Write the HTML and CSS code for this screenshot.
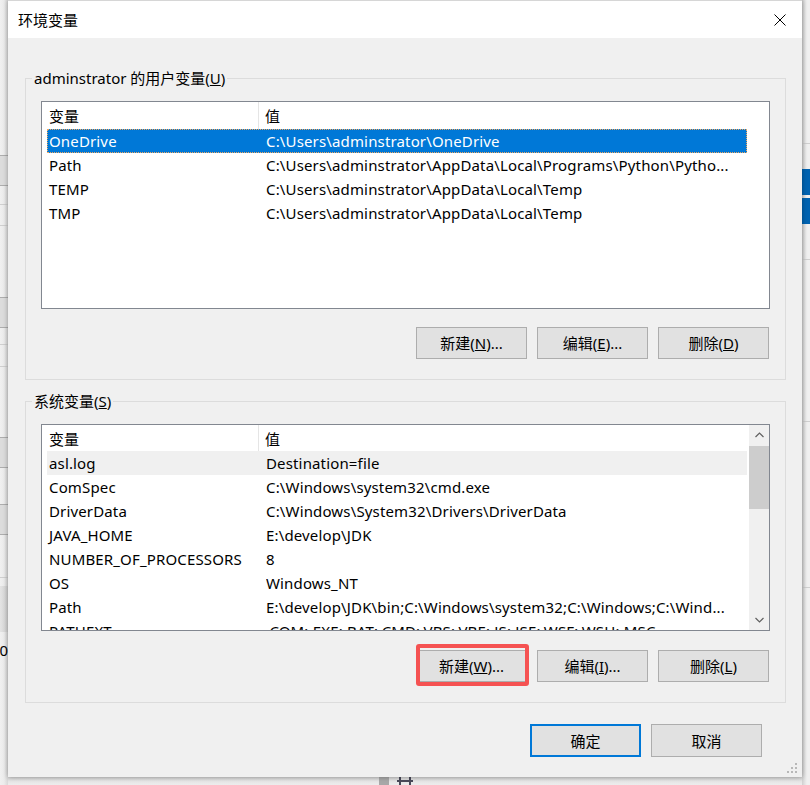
FILE: index.html
```html
<!DOCTYPE html>
<html lang="zh-CN">
<head>
<meta charset="utf-8">
<title>环境变量</title>
<link rel="stylesheet" href="styles.css">
</head>
<body>
<div class="desktop">
  <div class="strip strip-left">
    <div class="bg-btn b1"></div>
    <div class="bg-line l1"></div>
    <div class="bg-line l2"></div>
    <div class="bg-btn b2"></div>
    <div class="bg-line l3"></div>
    <div class="bg-line l4"></div>
    <div class="bg-btn b3"></div>
    <div class="bg-btn b4"></div>
    <div class="bg-line l5"></div>
    <div class="bg-block"></div>
    <div class="bg-text">00</div>
  </div>

  <div class="dialog-col">
    <div class="dialog">
      <div class="titlebar">
        <span class="title">环境变量</span>
        <svg class="close" width="12" height="12" viewBox="0 0 12 12"><path d="M0.5 0.5 L11.5 11.5 M11.5 0.5 L0.5 11.5" stroke="#000" stroke-width="1" fill="none"/></svg>
      </div>
      <div class="body">
        <div class="group">
          <div class="legend">adminstrator 的用户变量(<u>U</u>)</div>
          <div class="list list-user">
            <div class="head">
              <div class="hcol1">变量</div>
              <div class="hcol2">值</div>
            </div>
            <div class="row selected"><div class="c1">OneDrive</div><div class="c2">C:\Users\adminstrator\OneDrive</div></div>
            <div class="row"><div class="c1">Path</div><div class="c2">C:\Users\adminstrator\AppData\Local\Programs\Python\Pytho...</div></div>
            <div class="row"><div class="c1">TEMP</div><div class="c2">C:\Users\adminstrator\AppData\Local\Temp</div></div>
            <div class="row"><div class="c1">TMP</div><div class="c2">C:\Users\adminstrator\AppData\Local\Temp</div></div>
          </div>
          <div class="btn-row">
            <button class="btn">新建(<u>N</u>)...</button>
            <button class="btn">编辑(<u>E</u>)...</button>
            <button class="btn">删除(<u>D</u>)</button>
          </div>
        </div>

        <div class="group group-sys">
          <div class="legend">系统变量(<u>S</u>)</div>
          <div class="list list-sys">
            <div class="list-main">
              <div class="head">
                <div class="hcol1">变量</div>
                <div class="hcol2">值</div>
              </div>
              <div class="row hover"><div class="c1">asl.log</div><div class="c2">Destination=file</div></div>
              <div class="row"><div class="c1">ComSpec</div><div class="c2">C:\Windows\system32\cmd.exe</div></div>
              <div class="row"><div class="c1">DriverData</div><div class="c2">C:\Windows\System32\Drivers\DriverData</div></div>
              <div class="row"><div class="c1">JAVA_HOME</div><div class="c2">E:\develop\JDK</div></div>
              <div class="row"><div class="c1">NUMBER_OF_PROCESSORS</div><div class="c2">8</div></div>
              <div class="row"><div class="c1">OS</div><div class="c2">Windows_NT</div></div>
              <div class="row"><div class="c1">Path</div><div class="c2">E:\develop\JDK\bin;C:\Windows\system32;C:\Windows;C:\Wind...</div></div>
              <div class="row"><div class="c1">PATHEXT</div><div class="c2">.COM;.EXE;.BAT;.CMD;.VBS;.VBE;.JS;.JSE;.WSF;.WSH;.MSC</div></div>
            </div>
            <div class="scrollbar">
              <div class="sb-arrow">
                <svg width="9" height="6" viewBox="0 0 9 6"><path d="M0.5 5 L4.5 1 L8.5 5" stroke="#606060" stroke-width="1.2" fill="none"/></svg>
              </div>
              <div class="sb-thumb"></div>
              <div class="sb-track"></div>
              <div class="sb-arrow">
                <svg width="9" height="6" viewBox="0 0 9 6"><path d="M0.5 1 L4.5 5 L8.5 1" stroke="#606060" stroke-width="1.2" fill="none"/></svg>
              </div>
            </div>
          </div>
          <div class="btn-row btn-row-sys">
            <div class="btn-wrap">
              <button class="btn">新建(<u>W</u>)...</button>
              <div class="highlight"></div>
            </div>
            <button class="btn">编辑(<u>I</u>)...</button>
            <button class="btn">删除(<u>L</u>)</button>
          </div>
        </div>

        <div class="footer">
          <button class="btn btn-default">确定</button>
          <button class="btn">取消</button>
        </div>
        <svg class="grip" width="11" height="11" viewBox="0 0 11 11">
          <rect x="8" y="0" width="2" height="2" fill="#b8b8b8"/>
          <rect x="4" y="4" width="2" height="2" fill="#b8b8b8"/>
          <rect x="8" y="4" width="2" height="2" fill="#b8b8b8"/>
          <rect x="0" y="8" width="2" height="2" fill="#b8b8b8"/>
          <rect x="4" y="8" width="2" height="2" fill="#b8b8b8"/>
          <rect x="8" y="8" width="2" height="2" fill="#b8b8b8"/>
        </svg>
      </div>
    </div>
    <div class="bottom-strip">
      <div class="bs-block"></div>
      <svg class="bs-icon" width="16" height="8" viewBox="0 0 16 8">
        <rect x="0" y="3" width="16" height="2" fill="#4a4a5a"/>
        <rect x="2" y="0" width="2" height="8" fill="#4a4a5a"/>
        <rect x="12" y="0" width="2" height="8" fill="#4a4a5a"/>
      </svg>
    </div>
  </div>

  <div class="strip strip-right">
    <div class="bg-line r1"></div>
    <div class="bg-blue bl1"></div>
    <div class="bg-blue bl2"></div>
    <div class="bg-line r2"></div>
    <div class="bg-line r3"></div>
    <div class="bg-line r4"></div>
  </div>
</div>
</body>
</html>
```

FILE: styles.css
```css
* { box-sizing: border-box; }

html, body {
  margin: 0;
  padding: 0;
}

body {
  width: 810px;
  height: 785px;
  overflow: hidden;
  background: #f0f0f0;
  font-family: "Noto Sans", "Noto Sans CJK SC", sans-serif;
  font-size: 15px;
  color: #000;
}

.desktop {
  display: flex;
  width: 810px;
  height: 785px;
}

/* background app strips */
.strip {
  display: flex;
  flex-direction: column;
  flex: none;
  background: #f0f0f0;
}

.strip-left {
  width: 8px;
  background: linear-gradient(to right, #f0f0f0 0, #ececec 4px, #d8d8d8 8px);
}

.bg-btn {
  height: 31px;
  background: #dcdcdc;
  border-top: 1px solid #adadad;
  border-bottom: 1px solid #adadad;
}
.b1 { margin-top: 155px; }
.l1 { margin-top: 18px; }
.l2 { margin-top: 20px; }
.b2 { margin-top: 71px; }
.l3 { margin-top: 16px; }
.l4 { margin-top: 21px; }
.b3 { margin-top: 70px; }
.b4 { margin-top: 36px; }
.l5 { margin-top: 42px; }

.bg-line {
  height: 1px;
  background: #cfcfcf;
}

.bg-block {
  margin-top: 8px;
  height: 46px;
  background: linear-gradient(to right, #e4e4e4, #d0d0d0);
}

.bg-text {
  margin-top: 8px;
  font-size: 15px;
  line-height: 20px;
  white-space: nowrap;
  overflow: hidden;
  width: 8px;
  direction: rtl;
}

.strip-right {
  width: 8px;
  background: linear-gradient(to right, #cfcfcf 0, #e4e4e4 3px, #f0f0f0 5px);
}

.r1 { margin-top: 143px; }
.bg-blue {
  height: 26px;
  background: #0063b1;
}
.bl1 { margin-top: 25px; }
.bl2 { margin-top: 3px; }
.r2 { margin-top: 35px; }
.r3 { margin-top: 161px; }
.r4 { margin-top: 165px; }

/* dialog column */
.dialog-col {
  width: 794px;
  flex: none;
  display: flex;
  flex-direction: column;
}

.dialog {
  height: 777px;
  background: #f0f0f0;
  display: flex;
  flex-direction: column;
  box-shadow: 0 0 5px rgba(0, 0, 0, 0.35);
  position: relative;
  z-index: 1;
}

.titlebar {
  height: 38px;
  background: #fff;
  display: flex;
  align-items: center;
  justify-content: space-between;
  padding: 0 16px 0 10px;
  border-top: 1px solid #d6d6d6;
  flex: none;
}

.title {
  font-size: 15px;
  line-height: 20px;
}

.close { display: block; }

.body {
  flex: 1;
  padding: 40px 16px 0 17px;
  display: flex;
  flex-direction: column;
  position: relative;
}

/* group boxes */
.group {
  border: 1px solid #dcdcdc;
  padding: 0 15px 20px 15px;
  display: flex;
  flex-direction: column;
  height: 302px;
}

.group-sys { margin-top: 21px; }

.legend {
  margin: -12px 0 0 -9px;
  padding: 0 2px;
  height: 22px;
  line-height: 22px;
  background: #f0f0f0;
  align-self: flex-start;
  white-space: nowrap;
}

/* lists */
.list {
  margin-top: 12px;
  height: 208px;
  background: #fff;
  border: 1px solid #828790;
  overflow: hidden;
}

.list-user {
  padding: 0 0 0 5px;
}

.list-sys {
  height: 207px;
  display: flex;
}

.list-main {
  flex: 1;
  padding-left: 5px;
  overflow: hidden;
}

.head {
  height: 27px;
  display: flex;
  align-items: stretch;
}

.list-sys .head { height: 26px; }

.hcol1 {
  width: 212px;
  padding-left: 2px;
  border-right: 1px solid #e5e5e5;
  display: flex;
  align-items: center;
}

.hcol2 {
  padding-left: 6px;
  display: flex;
  align-items: center;
}

.row {
  width: 700px;
  height: 24px;
  display: flex;
  align-items: center;
  white-space: nowrap;
  letter-spacing: 0.15px;
}

.c1 {
  width: 219px;
  padding-left: 2px;
  flex: none;
  overflow: hidden;
}

.c2 {
  flex: 1;
  overflow: hidden;
}

.row.selected {
  background: #0078d7;
  color: #fff;
  outline: 1px dotted #f0a860;
  outline-offset: -1px;
}

.row.hover {
  background: #f0f0f0;
}

/* scrollbar */
.scrollbar {
  width: 20px;
  margin-left: 1px;
  flex: none;
  background: #f0f0f0;
  display: flex;
  flex-direction: column;
}

.sb-arrow {
  height: 20px;
  display: flex;
  align-items: center;
  justify-content: center;
  flex: none;
}

.sb-thumb {
  margin-top: 1px;
  height: 63px;
  background: #cdcdcd;
  flex: none;
}

.sb-track { flex: 1; }

/* buttons */
.btn-row {
  margin-top: 18px;
  display: flex;
  justify-content: flex-end;
  gap: 10px;
  padding-right: 1px;
}

.btn-row-sys { margin-top: 19px; }

.btn {
  width: 111px;
  height: 32px;
  margin: 0;
  padding: 0;
  background: #e1e1e1;
  border: 1px solid #adadad;
  font-family: "Noto Sans", "Noto Sans CJK SC", sans-serif;
  font-size: 15px;
  color: #000;
  line-height: 20px;
}

.btn-wrap {
  position: relative;
  display: flex;
}

.highlight {
  position: absolute;
  left: 0;
  top: -6px;
  width: 113px;
  height: 42px;
  border: 4px solid #f55252;
  border-radius: 3px;
}

.footer {
  margin-top: 21px;
  display: flex;
  justify-content: flex-end;
  gap: 10px;
  padding-right: 24px;
}

.btn-default {
  border: 2px solid #0078d7;
}

.footer .btn { height: 33px; }

.grip {
  position: absolute;
  right: 4px;
  bottom: 3px;
}

/* under the dialog */
.bottom-strip {
  flex: 1;
  display: flex;
  align-items: flex-start;
  padding-left: 371px;
  background: linear-gradient(to bottom, #d4d4d4 0, #e6e6e6 4px, #ececec 8px);
}

.bs-block {
  width: 10px;
  height: 8px;
  background: #a8a8a8;
}

.bs-icon {
  margin-left: 8px;
  margin-top: 0;
}
```
